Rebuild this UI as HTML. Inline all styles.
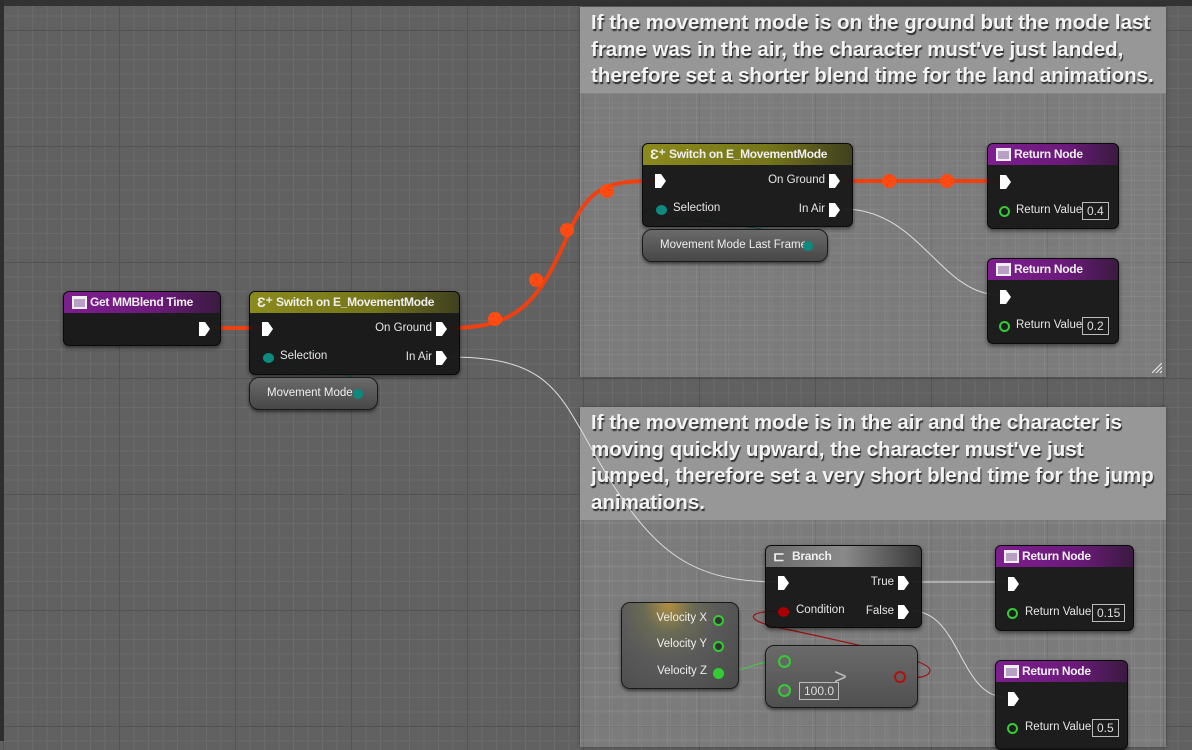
<!DOCTYPE html>
<html><head><meta charset="utf-8"><style>
*{margin:0;padding:0;box-sizing:border-box}
body{width:1192px;height:741px;overflow:hidden;position:relative;font-family:"Liberation Sans",sans-serif;
background-color:#616161;
background-image:linear-gradient(90deg,#545454 1px,transparent 1px),linear-gradient(0deg,#545454 1px,transparent 1px),linear-gradient(90deg,#6b6b6b 1px,transparent 1px),linear-gradient(0deg,#6b6b6b 1px,transparent 1px);
background-size:116px 116px,116px 116px,14.5px 14.5px,14.5px 14.5px;background-position:3px 31px,3px 31px,3px 2px,3px 2px}
.topbar{position:absolute;left:0;top:0;width:1192px;height:6px;background:#333}
.leftbar{position:absolute;left:0;top:0;width:4px;height:741px;background:#2e2e2e}
.cm{position:absolute;background-color:rgba(160,160,160,.42);
background-image:linear-gradient(90deg,rgba(255,255,255,.07) 1px,transparent 1px),linear-gradient(0deg,rgba(255,255,255,.07) 1px,transparent 1px);background-size:14.5px 14.5px;box-shadow:0 0 4px rgba(0,0,0,.3)}
.ch{position:absolute;left:0;top:0;right:0;background:#979797;color:#f4f4f4;font-weight:bold;font-size:20.5px;line-height:26.5px;padding:3px 11px;text-shadow:1px 2px 1px #2a2a2a;letter-spacing:0;white-space:nowrap}
.node{position:absolute;background:rgba(22,22,22,.93);border:1px solid #0a0a0a;border-radius:6px;box-shadow:0 2px 4px rgba(0,0,0,.5);color:#e6e6e6;font-size:11.5px;overflow:hidden}
.hd{height:21px;line-height:21px;padding-left:26px;font-weight:bold;color:#eee;position:relative;font-size:12px;letter-spacing:-0.3px}
.purple{background:linear-gradient(90deg,#7d1e8e,#6b1a7a 60%,#3a1a40)}
.olive{background:linear-gradient(90deg,#8b8a1c,#75751a 60%,#404020)}
.gray{background:linear-gradient(90deg,#6a6a6a,#8a8a8a 50%,#3a3a3a)}
.fn{position:absolute;left:8px;top:4px;width:15px;height:13px;background:#b8a0c4;border:2px solid #eee;border-top-width:3px}
.ic{position:absolute;left:7px;top:0;font-size:14px;font-weight:bold}
.ex{position:absolute;width:11px;height:14px;background:#fff;clip-path:polygon(0 0,55% 0,100% 50%,55% 100%,0 100%)}
.t{position:absolute;white-space:nowrap}
.pin{position:absolute;border-radius:50%}
.pill{position:absolute;border-radius:10px;background:linear-gradient(#6a6a6a,#474747);border:1px solid #1a1a1a;box-shadow:0 2px 3px rgba(0,0,0,.5);color:#eee;font-size:11.5px}
.box{position:absolute;border:1px solid #bbb;color:#ddd;font-size:12px;padding:0 4px;height:18px;line-height:16px}
</style></head><body>
<div class="topbar"></div><div class="leftbar"></div>
<div class="cm" style="left:580px;top:7px;width:586px;height:370px"><div class="ch" style="height:86px">If the movement mode is on the ground but the mode last<br>frame was in the air, the character must've just landed,<br>therefore set a shorter blend time for the land animations.</div>
<svg style="position:absolute;right:4px;bottom:4px" width="10" height="10"><path d="M0 10L10 0M4 10L10 4M8 10L10 8" stroke="#eee" stroke-width="1"/></svg></div>
<div class="cm" style="left:580px;top:407px;width:586px;height:340px"><div class="ch" style="height:113px">If the movement mode is in the air and the character is<br>moving quickly upward, the character must've just<br>jumped, therefore set a very short blend time for the jump<br>animations.</div></div>

<svg style="position:absolute;left:0;top:0" width="1192" height="741">
<g fill="none">
<path d="M215 328 L262 328" stroke="#f04010" stroke-width="4"/>
<path d="M450 328 C520 328,540 300,570 230 C590 185,610 181,655 181" stroke="#f04010" stroke-width="4"/>
<path d="M843 181 L1000 181" stroke="#f04010" stroke-width="4"/>
<path d="M450 357 C560 357,560 400,610 480 C660 560,700 582,780 582" stroke="#ddd" stroke-width="1"/>
<path d="M843 209 C920 209,940 295,1000 295" stroke="#ddd" stroke-width="1"/>
<path d="M912 582 L1005 582" stroke="#ddd" stroke-width="1"/>
<path d="M912 611 C960 611,960 697,1005 697" stroke="#ddd" stroke-width="1"/>
<path d="M720 672 C750 672,750 661,783 661" stroke="#4c4" stroke-width="1"/>
<path d="M783 611 C740 611,745 622,790 630 C860 645,930 660,930 670 C930 680,905 678,900 677" stroke="#a01010" stroke-width="1.2"/>
<path d="M262 356 C240 356,250 363,300 366 C360 370,380 395,360 393" stroke="#0c6a6a" stroke-width="1"/>
<path d="M655 209 C630 209,640 216,700 220 C780 230,840 245,810 245" stroke="#0c6a6a" stroke-width="1"/>
</g>
<g fill="#ff4a12"><circle cx="495" cy="319" r="7"/><circle cx="536" cy="280" r="7"/><circle cx="567" cy="230" r="7"/><circle cx="607" cy="191" r="7"/><circle cx="889" cy="181" r="7"/><circle cx="947" cy="181" r="7"/></g>
</svg>

<div class="node" style="left:63px;top:291px;width:158px;height:55px"><div class="hd purple"><span class="fn"></span>Get MMBlend Time</div><div class="ex" style="left:135px;top:30px"></div></div>

<div class="node" style="left:249px;top:291px;width:211px;height:84px"><div class="hd olive"><span class="ic">Ɛ⁺</span>Switch on E_MovementMode</div>
<div class="ex" style="left:12px;top:30px"></div><span class="t" style="right:27px;top:30px">On Ground</span><div class="ex" style="right:12px;top:30px"></div>
<div class="pin" style="left:13px;top:61px;width:11px;height:10px;background:#0c8a80"></div><span class="t" style="left:30px;top:58px">Selection</span>
<span class="t" style="right:27px;top:59px">In Air</span><div class="ex" style="right:12px;top:59px"></div></div>
<div class="pill" style="left:249px;top:377px;width:129px;height:33px"><span class="t" style="left:17px;top:9px">Movement Mode</span><div class="pin" style="left:103px;top:11px;width:10px;height:10px;background:#0c8a80"></div></div>

<div class="node" style="left:642px;top:143px;width:211px;height:84px"><div class="hd olive"><span class="ic">Ɛ⁺</span>Switch on E_MovementMode</div>
<div class="ex" style="left:12px;top:30px"></div><span class="t" style="right:27px;top:30px">On Ground</span><div class="ex" style="right:12px;top:30px"></div>
<div class="pin" style="left:13px;top:61px;width:11px;height:10px;background:#0c8a80"></div><span class="t" style="left:30px;top:58px">Selection</span>
<span class="t" style="right:27px;top:59px">In Air</span><div class="ex" style="right:12px;top:59px"></div></div>
<div class="pill" style="left:642px;top:229px;width:186px;height:33px"><span class="t" style="left:17px;top:9px">Movement Mode Last Frame</span><div class="pin" style="left:160px;top:11px;width:10px;height:10px;background:#0c8a80"></div></div>

<div class="node" style="left:987px;top:143px;width:132px;height:86px"><div class="hd purple"><span class="fn"></span>Return Node</div><div class="ex" style="left:12px;top:31px"></div>
<div class="pin" style="left:11px;top:62px;width:11px;height:11px;border:2px solid #3c3"></div><span class="t" style="left:28px;top:60px">Return Value</span><div class="box" style="left:94px;top:58px">0.4</div></div>
<div class="node" style="left:987px;top:258px;width:132px;height:86px"><div class="hd purple"><span class="fn"></span>Return Node</div><div class="ex" style="left:12px;top:31px"></div>
<div class="pin" style="left:11px;top:62px;width:11px;height:11px;border:2px solid #3c3"></div><span class="t" style="left:28px;top:60px">Return Value</span><div class="box" style="left:94px;top:58px">0.2</div></div>

<div class="node" style="left:765px;top:545px;width:157px;height:83px"><div class="hd gray"><span class="ic">⊏</span>Branch</div>
<div class="ex" style="left:12px;top:30px"></div><span class="t" style="right:27px;top:30px">True</span><div class="ex" style="right:12px;top:30px"></div>
<div class="pin" style="left:12px;top:61px;width:11px;height:10px;background:#a00"></div><span class="t" style="left:30px;top:58px">Condition</span>
<span class="t" style="right:27px;top:59px">False</span><div class="ex" style="right:12px;top:59px"></div></div>

<div class="node" style="left:995px;top:545px;width:139px;height:86px"><div class="hd purple"><span class="fn"></span>Return Node</div><div class="ex" style="left:12px;top:31px"></div>
<div class="pin" style="left:11px;top:62px;width:11px;height:11px;border:2px solid #3c3"></div><span class="t" style="left:29px;top:60px">Return Value</span><div class="box" style="left:96px;top:58px">0.15</div></div>
<div class="node" style="left:995px;top:660px;width:133px;height:90px"><div class="hd purple"><span class="fn"></span>Return Node</div><div class="ex" style="left:12px;top:31px"></div>
<div class="pin" style="left:11px;top:62px;width:11px;height:11px;border:2px solid #3c3"></div><span class="t" style="left:29px;top:60px">Return Value</span><div class="box" style="left:96px;top:58px">0.5</div></div>

<div class="pill" style="left:621px;top:602px;width:118px;height:87px;border-radius:9px;background:radial-gradient(ellipse at 40% 0%,#b09040 0,#6a6a55 25%,#5a5a5a 50%,#4a4a4a)">
<span class="t" style="right:31px;top:9px">Velocity X</span><div class="pin" style="right:14px;top:12px;width:11px;height:11px;border:2px solid #3c3;background:#333"></div>
<span class="t" style="right:31px;top:35px">Velocity Y</span><div class="pin" style="right:14px;top:38px;width:11px;height:11px;border:2px solid #3c3;background:#333"></div>
<span class="t" style="right:31px;top:62px">Velocity Z</span><div class="pin" style="right:14px;top:65px;width:11px;height:11px;background:#3c3"></div></div>

<div class="pill" style="left:765px;top:645px;width:153px;height:63px;border-radius:9px;background:linear-gradient(#6a6a6a,#505050)">
<div class="pin" style="left:12px;top:9px;width:13px;height:13px;border:2px solid #3c3;background:#666"></div>
<div class="pin" style="left:12px;top:38px;width:13px;height:13px;border:2px solid #3c3;background:#666"></div>
<div class="box" style="left:33px;top:36px">100.0</div>
<span class="t" style="left:68px;top:18px;font-size:22px;color:#bbb">&gt;</span>
<div class="pin" style="left:128px;top:25px;width:12px;height:12px;border:2px solid #b01010"></div></div>
</body></html>
